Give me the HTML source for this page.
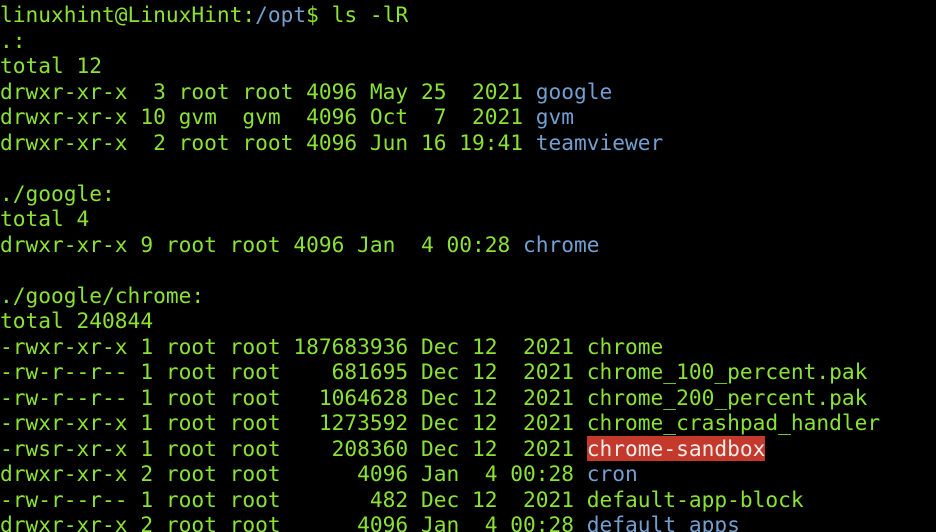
<!DOCTYPE html>
<html><head><meta charset="utf-8"><style>
html,body{margin:0;padding:0;background:#000;width:936px;height:532px;overflow:hidden}
pre{margin:0;padding:2px 0 0 0;font-family:"DejaVu Sans Mono","Liberation Mono",monospace;font-size:21.2px;line-height:25.5px;color:#8ae234;white-space:pre}
.b{color:#729fcf}
.r{background:#c4392c;color:#eeeeec}
</style></head><body><pre>linuxhint@LinuxHint:<span class="b">/opt</span>$ ls -lR
.:
total 12
drwxr-xr-x  3 root root 4096 May 25  2021 <span class="b">google</span>
drwxr-xr-x 10 gvm  gvm  4096 Oct  7  2021 <span class="b">gvm</span>
drwxr-xr-x  2 root root 4096 Jun 16 19:41 <span class="b">teamviewer</span>

./google:
total 4
drwxr-xr-x 9 root root 4096 Jan  4 00:28 <span class="b">chrome</span>

./google/chrome:
total 240844
-rwxr-xr-x 1 root root 187683936 Dec 12  2021 chrome
-rw-r--r-- 1 root root    681695 Dec 12  2021 chrome_100_percent.pak
-rw-r--r-- 1 root root   1064628 Dec 12  2021 chrome_200_percent.pak
-rwxr-xr-x 1 root root   1273592 Dec 12  2021 chrome_crashpad_handler
-rwsr-xr-x 1 root root    208360 Dec 12  2021 <span class="r">chrome-sandbox</span>
drwxr-xr-x 2 root root      4096 Jan  4 00:28 <span class="b">cron</span>
-rw-r--r-- 1 root root       482 Dec 12  2021 default-app-block
drwxr-xr-x 2 root root      4096 Jan  4 00:28 <span class="b">default_apps</span>
</pre></body></html>
